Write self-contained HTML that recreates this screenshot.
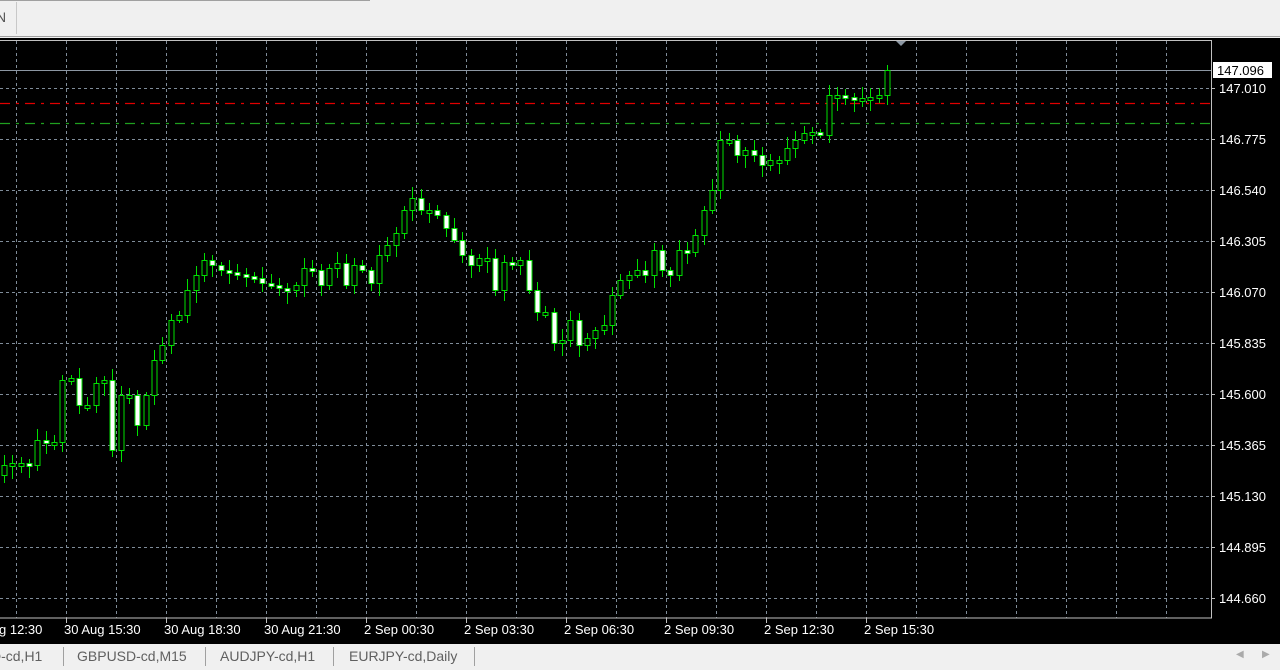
<!DOCTYPE html>
<html><head><meta charset="utf-8"><style>
html,body{margin:0;padding:0;width:1280px;height:670px;overflow:hidden;background:#f0f0f0;font-family:"Liberation Sans",sans-serif}
#top{position:absolute;left:0;top:0;width:1280px;height:36px;background:#f0f0f0;border-bottom:1px solid #a0a0a0}
#tabs{position:absolute;left:0;top:644px;width:1280px;height:26px;background:#f0f0f0;font-size:14px;color:#606060}
.tab{position:absolute;top:4px}
.sep{position:absolute;top:3px;width:1px;height:19px;background:#a0a0a0}
svg{position:absolute;left:0;top:38px}
</style></head><body>
<div id="top">
<div style="position:absolute;left:0;top:0;width:370px;height:1px;background:#a0a0a0"></div>
<div style="position:absolute;left:-4px;top:9px;font-size:14px;color:#555">N</div>
<div style="position:absolute;left:16px;top:2px;width:1px;height:32px;background:#c8c8c8"></div>
</div>
<svg id="c" width="1280" height="606" viewBox="0 38 1280 606">
<rect x="0" y="38" width="1280" height="606" fill="#000"/>
<g id="grid" stroke="#7f8c99" stroke-width="1" stroke-dasharray="3,3"></g>
<rect x="-1" y="40.5" width="1212.5" height="577.5" fill="none" stroke="#c0c0c0"/>
<line x1="0" y1="70.5" x2="1211" y2="70.5" stroke="#8c97a3"/>
<line x1="0" y1="103.5" x2="1211" y2="103.5" stroke="#e00000" stroke-width="1.2" stroke-dasharray="10,6,3,6"/>
<line x1="0" y1="123.5" x2="1211" y2="123.5" stroke="#1fa01f" stroke-width="1.2" stroke-dasharray="10,6,3,6"/>
<polygon points="896,41 906,41 901,46" fill="#8c97a3"/>
<g id="cd"></g>
<rect x="1213" y="62" width="59" height="16" fill="#fff"/>
<text x="1217" y="75" font-size="13" font-family="Liberation Sans" fill="#000">147.096</text>
<g id="lab" font-size="13" font-family="Liberation Sans" fill="#fff"></g>
</svg>
<div id="tabs">
<div class="tab" style="left:-9px">D-cd,H1</div>
<div class="sep" style="left:63px"></div>
<div class="tab" style="left:77px">GBPUSD-cd,M15</div>
<div class="sep" style="left:205px"></div>
<div class="tab" style="left:220px">AUDJPY-cd,H1</div>
<div class="sep" style="left:333px"></div>
<div class="tab" style="left:349px">EURJPY-cd,Daily</div>
<div class="sep" style="left:474px"></div>
<div style="position:absolute;left:1236px;top:5px;font-size:10px;color:#aaa">&#9664;</div>
<div style="position:absolute;left:1262px;top:5px;font-size:10px;color:#aaa">&#9654;</div>
</div>
<script>
(function(){
var ns="http://www.w3.org/2000/svg";
function el(t,a,p){var e=document.createElementNS(ns,t);for(var k in a)e.setAttribute(k,a[k]);document.getElementById(p).appendChild(e);return e;}
for(var x=16;x<1211;x+=50){el("line",{x1:x+.5,y1:41,x2:x+.5,y2:618},"grid");}
var prices=["147.010","146.775","146.540","146.305","146.070","145.835","145.600","145.365","145.130","144.895","144.660"];
for(var i=0;i<11;i++){var y=88+51*i;el("line",{x1:0,y1:y+.5,x2:1211,y2:y+.5},"grid");
el("line",{x1:1211,y1:y+.5,x2:1215,y2:y+.5,stroke:"#c0c0c0"},"lab");
var t=el("text",{x:1219,y:y+5},"lab");t.textContent=prices[i];}
var times=["g 12:30","30 Aug 15:30","30 Aug 18:30","30 Aug 21:30","2 Sep 00:30","2 Sep 03:30","2 Sep 06:30","2 Sep 09:30","2 Sep 12:30","2 Sep 15:30"];
for(var i=0;i<times.length;i++){var x=i==0?-1:66+100*(i-1)-2;
if(i>0)el("line",{x1:66+100*(i-1)+.5,y1:618,x2:66+100*(i-1)+.5,y2:623,stroke:"#c0c0c0"},"lab");
var t=el("text",{x:x,y:634},"lab");t.textContent=times[i];}
var cl=[475,465,463,463,465,440,443,442,380,378,405,405,383,380,450,395,395,425,395,360,345,320,315,290,275,260,265,270,272,274,276,278,283,285,288,290,285,268,270,285,268,263,285,265,270,283,255,245,233,210,198,210,210,215,228,240,255,265,258,258,290,262,265,260,290,312,312,343,340,320,345,338,330,325,295,280,275,270,275,250,270,275,250,252,235,210,190,140,140,155,150,155,165,160,160,148,140,133,132,135,95,95,97,100,98,97,95,70];
var n=cl.length,prev=480;
for(var i=0;i<n;i++){var x=Math.round(887-(n-1-i)*8.33);var o=prev,c=cl[i];
var bt=Math.min(o,c),bb=Math.max(o,c);if(bb-bt<3){bb=bt+3;}
var h=bt-3-((i*7)%9),l=bb+3+((i*5)%11);
el("line",{x1:x+.5,y1:h,x2:x+.5,y2:l,stroke:"#00e000"},"cd");
el("rect",{x:x-2,y:bt+.5,width:5,height:bb-bt,fill:(c>o?"#fff":"#000"),stroke:"#00e000"},"cd");
prev=c;}
})();
</script>
</body></html>
